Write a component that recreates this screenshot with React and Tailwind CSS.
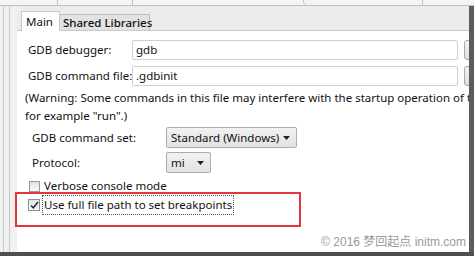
import React from "react";

const font = { fontFamily: '"Noto Sans", "Noto Sans CJK SC", sans-serif' };

const Select = ({ value, width }) => (
  <div
    className={`flex items-center justify-between h-[21px] ${width} pl-[4px] pr-[6px] border border-[#adadad] rounded-[2px] bg-gradient-to-b from-[#f2f2f2] to-[#e2e2e2]`}
  >
    <span>{value}</span>
    <svg width="7" height="4" viewBox="0 0 7 4" className="shrink-0">
      <path d="M0 0h7L3.5 4z" fill="#222" />
    </svg>
  </div>
);

const Field = ({ label, value }) => (
  <div className="flex items-center h-[20px]">
    <span className="w-[104px] shrink-0">{label}</span>
    <div className="w-[326px] h-[20px] shrink-0 border border-[#cfcfcf] rounded-[2px] bg-white px-[3px] flex items-center">
      {value}
    </div>
    <div className="ml-[6px] w-[12px] h-[20px] shrink-0 border border-[#a9a9a9] rounded-[3px] bg-gradient-to-b from-[#f4f4f4] to-[#dedede]" />
  </div>
);

export default function App() {
  return (
    <div
      className="w-[474px] h-[256px] overflow-hidden relative bg-[#f0f0f0] text-[11.5px] leading-[18px] text-[#111] flex flex-col whitespace-nowrap"
      style={font}
    >
      {/* outer tab strip, mostly cut off */}
      <div className="h-[6px] shrink-0 flex border-b border-[#bdbdbd] bg-[#f4f4f4]">
        <div className="w-[58px] border-r border-[#c4c4c4]" />
        <div className="w-[75px] border-r border-[#c4c4c4]" />
        <div className="w-[170px]" />
        <div className="w-[120px] border-l border-r border-[#c4c4c4] rounded-bl-[4px]" />
        <div className="flex-1" />
      </div>

      <div className="flex flex-1 min-h-0">
        {/* left gutter */}
        <div className="w-[17px] shrink-0 flex">
          <div className="w-[3px]" />
          <div className="w-[1px] bg-[#c8c8c8]" />
          <div className="w-[5px]" />
          <div className="w-[1px] bg-[#c8c8c8]" />
          <div className="flex-1" />
        </div>

        {/* main tab folder */}
        <div className="flex-1 min-w-0 flex flex-col">
          <div className="h-[25px] shrink-0 flex items-end pl-[4px] bg-[#ececec] border-b border-[#c9c9c9]">
            <div className="h-[20px] w-[39px] shrink-0 pl-[4px] bg-white border border-b-0 border-[#c9c9c9] flex items-center -mb-[1px] relative z-10">
              Main
            </div>
            <div className="h-[16px] w-[90px] shrink-0 pl-[3px] bg-[#e2e2e2] border border-l-0 border-b-0 border-[#bcbcbc] flex items-center font-medium">
              Shared Libraries
            </div>
          </div>

          <div className="flex-1 bg-white pl-[11px] pt-[9px] flex flex-col overflow-hidden">
            <div className="flex flex-col gap-[6px]">
              <Field label="GDB debugger:" value="gdb" />
              <Field label="GDB command file:" value=".gdbinit" />
            </div>
            <div className="mt-[3px] -ml-[3px]">
              <div>(Warning: Some commands in this file may interfere with the startup operation of the debugger,</div>
              <div>for example "run".)</div>
            </div>
            <div className="mt-[2px] pl-[4px] flex flex-col gap-[4px]">
              <div className="flex items-center">
                <span className="w-[134px]">GDB command set:</span>
                <Select value="Standard (Windows)" width="w-[131px]" />
              </div>
              <div className="flex items-center">
                <span className="w-[134px]">Protocol:</span>
                <Select value="mi" width="w-[45px]" />
              </div>
            </div>
            <div className="mt-[4px] flex flex-col">
              <label className="flex items-center gap-[4px] pl-[1px]">
                <span className="w-[11px] h-[11px] border border-[#9a9a9a] bg-gradient-to-b from-[#e4e4e4] to-[#f8f8f8]" />
                <span>Verbose console mode</span>
              </label>
              <label className="flex items-center gap-[2px]">
                <span className="w-[12px] h-[12px] border border-[#8f8f8f] bg-gradient-to-b from-[#e0e6ee] to-[#f6f8fa] flex items-center justify-center">
                  <svg width="9" height="8" viewBox="0 0 9 8">
                    <path d="M1 4.5l2.3 2.3L8 1" stroke="#1d2a44" strokeWidth="1.5" fill="none" />
                  </svg>
                </span>
                <span className="px-[1px] border border-dotted border-[#555]">Use full file path to set breakpoints</span>
              </label>
            </div>
          </div>
        </div>

        {/* right dark edge */}
        <div className="w-[5px] shrink-0 bg-[#5c5c5c]" />
      </div>

      <div className="h-[4px] shrink-0 bg-[#4e4e4e]" />

      {/* annotation box */}
      <div className="absolute left-[15px] top-[192px] w-[286px] h-[35px] border-2 border-[#e2373a]" />

      {/* watermark */}
      <div
        className="absolute right-[8px] bottom-[5px] text-[12px] text-[#9a9a9a]"
        style={{ fontFamily: '"Liberation Sans", "Noto Sans CJK SC", sans-serif' }}
      >
        © 2016 梦回起点 initm.com
      </div>
    </div>
  );
}
